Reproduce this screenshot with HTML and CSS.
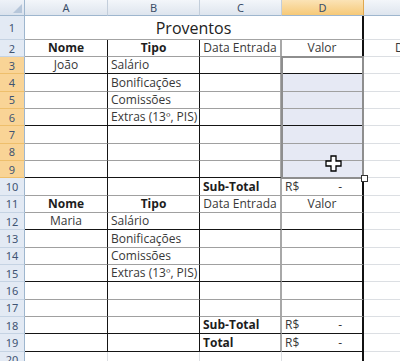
FILE: index.html
```html
<!DOCTYPE html>
<html lang="pt">
<head>
<meta charset="utf-8">
<title>Proventos</title>
<link rel="stylesheet" href="styles.css">
</head>
<body>
<div class="viewport">
  <div class="sheet">
    <div class="row">
      <div class="corner"><span class="tri"></span></div>
      <div class="ch">A</div><div class="ch">B</div><div class="ch">C</div><div class="ch sel">D</div><div class="ch"></div>
    </div>
    <div class="row">
      <div class="rh">1</div>
      <div class="c title">Proventos</div>
      <div class="c e"></div>
    </div>
    <div class="row bl">
      <div class="rh">2</div>
      <div class="c t a hd">Nome</div><div class="c t b hd">Tipo</div><div class="c t cc ctr">Data Entrada</div><div class="c t d ctr">Valor</div><div class="c e"><span class="peek">D</span></div>
    </div>
    <div class="row bk">
      <div class="rh sel">3</div>
      <div class="c t a ctr">João</div><div class="c t b">Salário</div><div class="c t cc"></div><div class="c t d"></div><div class="c e"></div>
    </div>
    <div class="row bl">
      <div class="rh sel">4</div>
      <div class="c t a"></div><div class="c t b">Bonificações</div><div class="c t cc"></div><div class="c t d fill"></div><div class="c e"></div>
    </div>
    <div class="row bl">
      <div class="rh sel">5</div>
      <div class="c t a"></div><div class="c t b">Comissões</div><div class="c t cc"></div><div class="c t d fill"></div><div class="c e"></div>
    </div>
    <div class="row bk">
      <div class="rh sel">6</div>
      <div class="c t a"></div><div class="c t b">Extras (13º, PIS)</div><div class="c t cc"></div><div class="c t d fill"></div><div class="c e"></div>
    </div>
    <div class="row bl">
      <div class="rh sel">7</div>
      <div class="c t a"></div><div class="c t b"></div><div class="c t cc"></div><div class="c t d fill"></div><div class="c e"></div>
    </div>
    <div class="row bl">
      <div class="rh sel">8</div>
      <div class="c t a"></div><div class="c t b"></div><div class="c t cc"></div><div class="c t d fill"></div><div class="c e"></div>
    </div>
    <div class="row bk">
      <div class="rh sel">9</div>
      <div class="c t a"></div><div class="c t b"></div><div class="c t cc"></div><div class="c t d fill"></div><div class="c e"></div>
    </div>
    <div class="row bl">
      <div class="rh">10</div>
      <div class="c t a"></div><div class="c t b"></div><div class="c t cc bold">Sub-Total</div><div class="c t d money"><span>R$</span><span>-</span></div><div class="c e"></div>
    </div>
    <div class="row bl">
      <div class="rh">11</div>
      <div class="c t a hd">Nome</div><div class="c t b hd">Tipo</div><div class="c t cc ctr">Data Entrada</div><div class="c t d ctr">Valor</div><div class="c e"></div>
    </div>
    <div class="row bk">
      <div class="rh">12</div>
      <div class="c t a ctr">Maria</div><div class="c t b">Salário</div><div class="c t cc"></div><div class="c t d"></div><div class="c e"></div>
    </div>
    <div class="row bl">
      <div class="rh">13</div>
      <div class="c t a"></div><div class="c t b">Bonificações</div><div class="c t cc"></div><div class="c t d"></div><div class="c e"></div>
    </div>
    <div class="row bl">
      <div class="rh">14</div>
      <div class="c t a"></div><div class="c t b">Comissões</div><div class="c t cc"></div><div class="c t d"></div><div class="c e"></div>
    </div>
    <div class="row bk">
      <div class="rh">15</div>
      <div class="c t a"></div><div class="c t b">Extras (13º, PIS)</div><div class="c t cc"></div><div class="c t d"></div><div class="c e"></div>
    </div>
    <div class="row bl">
      <div class="rh">16</div>
      <div class="c t a"></div><div class="c t b"></div><div class="c t cc"></div><div class="c t d"></div><div class="c e"></div>
    </div>
    <div class="row bl">
      <div class="rh">17</div>
      <div class="c t a"></div><div class="c t b"></div><div class="c t cc"></div><div class="c t d"></div><div class="c e"></div>
    </div>
    <div class="row bk">
      <div class="rh">18</div>
      <div class="c t a"></div><div class="c t b"></div><div class="c t cc bold">Sub-Total</div><div class="c t d money"><span>R$</span><span>-</span></div><div class="c e"></div>
    </div>
    <div class="row bk">
      <div class="rh">19</div>
      <div class="c t a"></div><div class="c t b"></div><div class="c t cc bold">Total</div><div class="c t d money"><span>R$</span><span>-</span></div><div class="c e"></div>
    </div>
    <div class="row">
      <div class="rh">20</div>
      <div class="c"></div><div class="c"></div><div class="c"></div><div class="c d"></div><div class="c e"></div>
    </div>
  </div>
  <div class="selection"></div>
  <div class="handle"></div>
  <svg class="cursor" width="18" height="18" viewBox="0 0 18 18">
    <polygon points="6,1 11,1 11,6 16,6 16,11 11,11 11,16 6,16 6,11 1,11 1,6 6,6" fill="#fff" stroke="#000" stroke-width="1.3" stroke-linejoin="miter"/>
  </svg>
</div>
</body>
</html>
```
FILE: styles.css
```css
html, body {
  margin: 0;
  padding: 0;
  background: #fff;
}
.viewport {
  position: relative;
  width: 400px;
  height: 361px;
  overflow: hidden;
}
.sheet {
  display: grid;
  grid-template-columns: 25px 83px 92px 82px 82px 82px;
  grid-template-rows: 16px 24px 17px repeat(18, 17.33px);
  width: 446px;
  font-family: "Open Sans", "Noto Sans", sans-serif;
  font-size: 12px;
  color: #383838;
}
.row { display: contents; }

/* headers */
.corner {
  position: relative;
  background: linear-gradient(#eef2f8, #dae2ed);
  border-right: 1px solid #9eb6ce;
  border-bottom: 1px solid #9eb6ce;
  box-sizing: border-box;
}
.tri {
  position: absolute;
  right: 2px;
  bottom: 2px;
  width: 0;
  height: 0;
  border-left: 9px solid transparent;
  border-bottom: 9px solid #b6c6da;
}
.ch {
  display: flex;
  align-items: center;
  justify-content: center;
  background: linear-gradient(#f3f6fa, #dee5ee);
  border-right: 1px solid #c3cedb;
  border-bottom: 1px solid #9eb6ce;
  box-sizing: border-box;
  font-family: "Noto Sans", sans-serif;
  font-size: 11px;
  color: #3a4e68;
}
.ch.sel {
  background: linear-gradient(#fbe3b6, #f6c978);
  border-right-color: #e0a84f;
}
.rh {
  display: flex;
  align-items: center;
  justify-content: center;
  background: #e3eaf4;
  border-right: 1px solid #9eb6ce;
  border-bottom: 1px solid #c5d3e3;
  box-sizing: border-box;
  font-family: "Noto Sans", sans-serif;
  font-size: 11px;
  color: #3f5473;
  overflow: hidden;
}
.rh.sel {
  background: #f9d496;
  border-bottom-color: #eebf6c;
}

/* cells */
.c {
  display: flex;
  align-items: flex-end;
  padding: 0 3px 1px;
  box-sizing: border-box;
  border-right: 1px solid #dcdfe3;
  border-bottom: 1px solid #dcdfe3;
  white-space: nowrap;
  overflow: hidden;
  line-height: 15px;
}
.title {
  grid-column: span 4;
  justify-content: center;
  font-size: 16px;
  line-height: 22px;
  padding-bottom: 0;
  color: #222;
  border-right: 2px solid #111;
  border-bottom-color: #a3a3a3;
}
.row.bk > .t { border-bottom-color: #151515; }
.row.bl > .t { border-bottom-color: #a0a0a0; }
.t.a, .t.b { border-right-color: #151515; }
.t.cc { border-right: 2px solid #a8a8a8; }
.d { border-right: 2px solid #111; }
.fill { background: #e6e9f4; }

.hd { font-weight: 700; justify-content: center; color: #1d1d1d; }
.ctr { justify-content: center; }
.bold { font-weight: 700; color: #1d1d1d; }
.money { justify-content: space-between; padding-right: 20px; }
.peek { padding-left: 28px; }

/* overlays */
.selection {
  position: absolute;
  left: 281px;
  top: 56px;
  width: 83px;
  height: 123px;
  box-sizing: border-box;
  border: 2px solid #8e8e8e;
  pointer-events: none;
}
.handle {
  position: absolute;
  left: 361px;
  top: 175px;
  width: 5px;
  height: 5px;
  background: #fff;
  border: 1px solid #333;
}
.cursor {
  position: absolute;
  left: 325px;
  top: 155px;
}
```
